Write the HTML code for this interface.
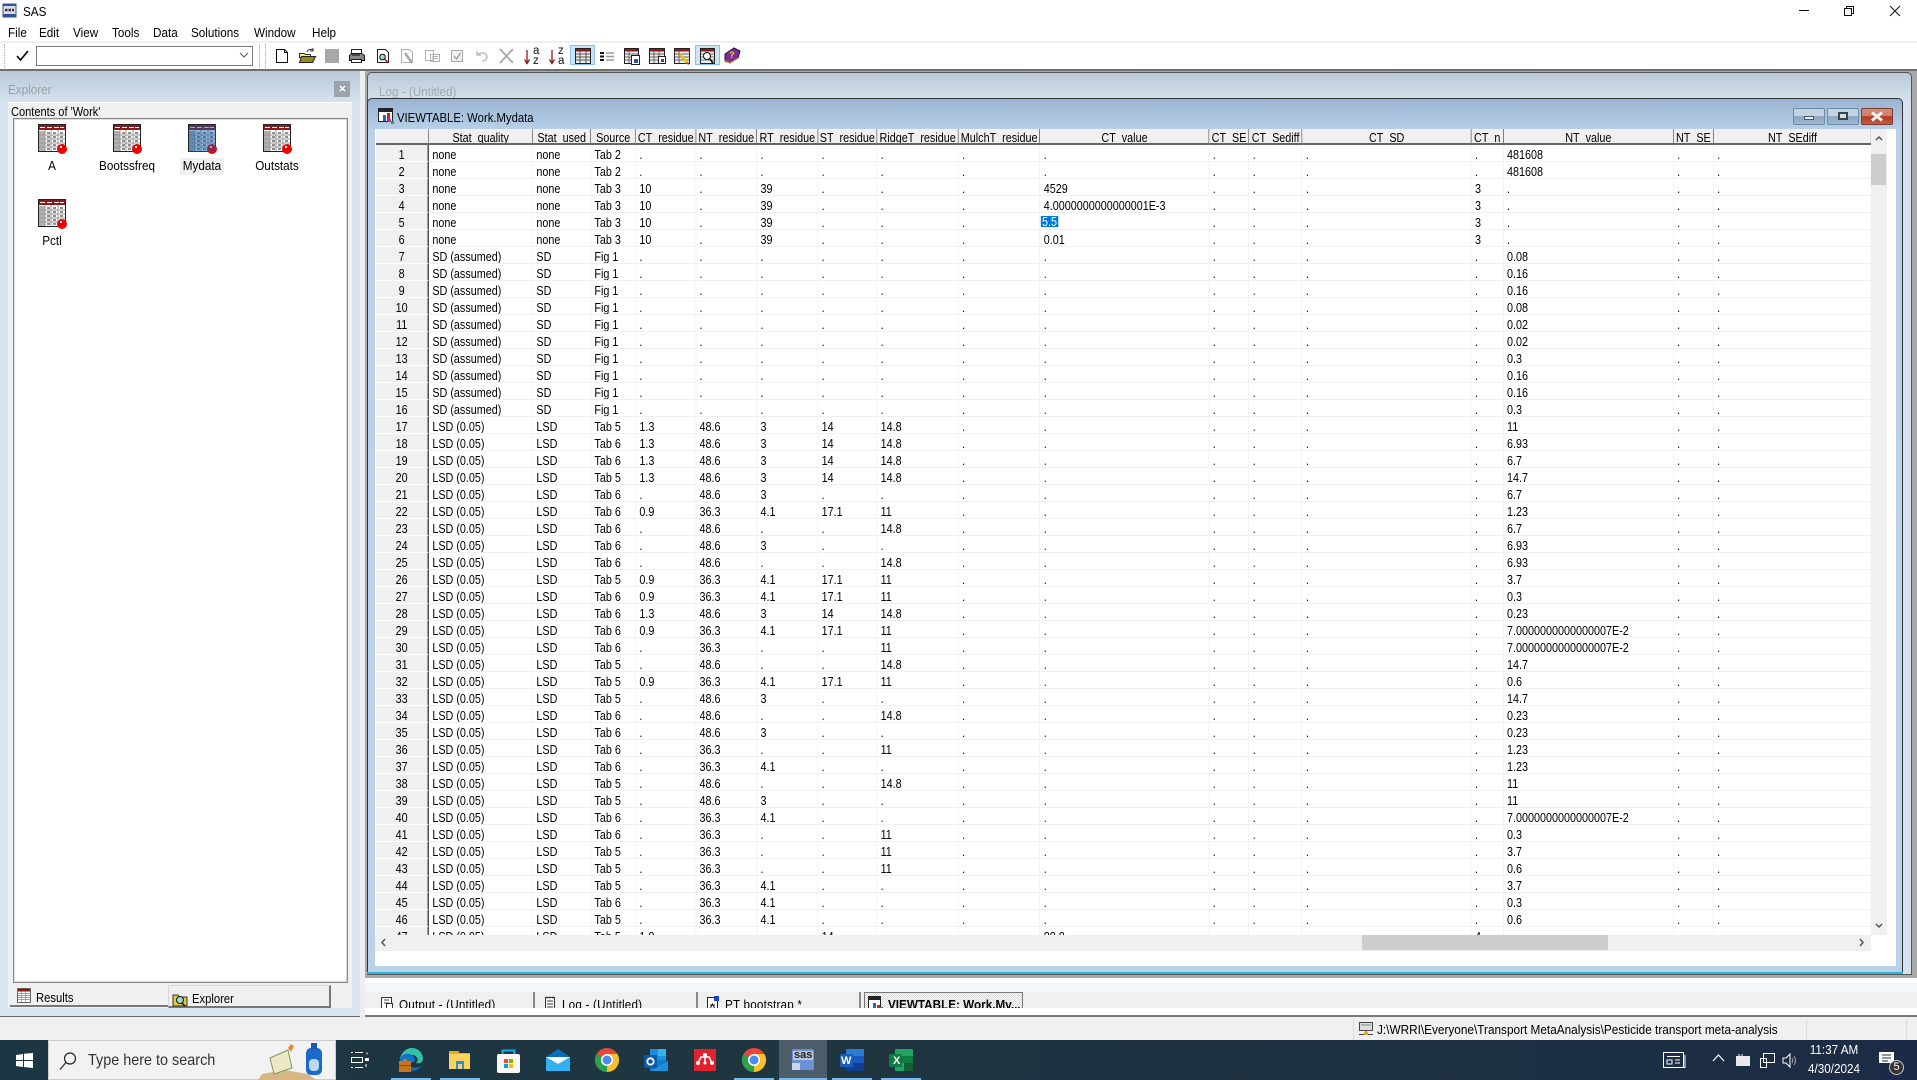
<!DOCTYPE html>
<html><head><meta charset="utf-8"><title>SAS</title>
<style>
html,body{margin:0;padding:0;width:1917px;height:1080px;overflow:hidden;background:#fff;font-family:"Liberation Sans",sans-serif;color:#000}
.a{position:absolute}
.t{position:absolute;white-space:nowrap;font-size:13px;line-height:16px;transform:scaleX(.9);transform-origin:left center}
.c{position:absolute;white-space:nowrap;font-size:13px;line-height:16px;transform:translateX(-50%) scaleX(.9)}
svg.a{overflow:visible}
#tw{position:absolute;left:375px;top:129px;width:1496px;height:806px;overflow:hidden;background:#fff}
table{position:absolute;left:1px;top:0;border-collapse:separate;border-spacing:0;table-layout:fixed;width:1802.400px;font-size:13px;transform:scaleX(.83);transform-origin:left top}
td,th{height:17px;box-sizing:border-box;padding:3px 0 0 4px;border-right:1px solid #f0f0f0;border-bottom:1px solid #f0f0f0;white-space:nowrap;overflow:hidden;font-weight:400;text-align:left;vertical-align:top;line-height:13px;background:#fff}
thead th{height:16px;line-height:11px;background:#f0f0f0;border-right:1px solid #666;border-bottom:2px solid #666;text-align:center;padding:3px 0 0}
tbody th{background:#f0f0f0;border-right:2px solid #555;border-bottom:1px solid #fff;text-align:center;padding:3px 0 0}
.sel{background:#0078d7;color:#fff;position:relative;top:0;left:-3px;display:inline-block;vertical-align:top;line-height:11px;height:11px;padding:0 1px}
.tab{position:absolute;top:9px;height:24px;background:#f0f0f0;border-right:2px solid #8a8a8a;box-sizing:border-box}
</style></head><body>
<svg width="0" height="0" style="position:absolute"><defs>
<symbol id="tb" viewBox="0 0 30 30"><rect x=".5" y=".5" width="27" height="27" fill="#fff" stroke="#222"/><rect x="1" y="1" width="26" height="5" fill="#8b1a1a"/><rect x="1" y="7" width="6" height="20" fill="#b0b0b0"/><path d="M2 3.500h5M9 3.500h5M16 3.500h5M22 3.500h4" stroke="#fff"/><path d="M1 11h26M1 15h26M1 19h26M1 23h26M7 6v21M13 6v21M20 6v21" stroke="#999"/><path d="M9 9h3M15 9h3M22 9h3M9 13h3M15 13h3M22 13h3M9 17h3M15 17h3M22 17h3M9 21h3M15 21h3M22 21h3M9 25h3M15 25h3" stroke="#222"/><circle cx="24" cy="25" r="5" fill="#e00"/><rect x="22" y="22" width="2" height="2" fill="#fff"/></symbol>
<symbol id="tbs" viewBox="0 0 24 24"><rect x="2.500" y="1.500" width="19" height="21" fill="#fff" stroke="#222"/><rect x="3" y="2" width="18" height="4" fill="#8b1a1a"/><path d="M3 9h18M3 12h18M3 15h18M3 18h18M8 6v16M14 6v16" stroke="#888"/></symbol>
</defs></svg>

<!-- title bar -->
<div class="a" style="left:0;top:0;width:1917px;height:41px;background:#fff"></div>
<svg class="a" style="left:2px;top:3px" width="15" height="15" viewBox="0 0 15 15"><rect x=".5" y=".5" width="14" height="14" fill="#2f5597"/><rect x="1.500" y="3" width="12" height="8" fill="#dde"/><path d="M3 7h9" stroke="#333" stroke-width="2.500" stroke-dasharray="2.500 1"/></svg>
<div class="t" style="left:23px;top:4px;font-size:13px">SAS</div>
<svg class="a" style="left:1799px;top:5px" width="105" height="12" viewBox="0 0 105 12" fill="none" stroke="#111"><path d="M0 5.500h10"/><path d="M45.500 3.500h7v7h-7zM47.500 3.500v-2h7v7h-2"/><path d="M91 1l10 10M101 1l-10 10"/></svg>
<div class="t" style="left:8px;top:25px">File</div><div class="t" style="left:39px;top:25px">Edit</div><div class="t" style="left:73px;top:25px">View</div><div class="t" style="left:112px;top:25px">Tools</div><div class="t" style="left:153px;top:25px">Data</div><div class="t" style="left:191px;top:25px">Solutions</div><div class="t" style="left:254px;top:25px">Window</div><div class="t" style="left:312px;top:25px">Help</div>
<!-- toolbar -->
<div class="a" style="left:0;top:41px;width:1917px;height:2px;background:#f0f0f0"></div>
<div class="a" style="left:0;top:43px;width:1917px;height:26px;background:#fff"></div>
<div class="a" style="left:4px;top:44px;height:24px;border-left:1px dotted #aaa"></div>
<div class="a" style="left:259px;top:44px;height:24px;border-left:1px solid #ccc"></div>
<div class="a" style="left:265px;top:44px;height:24px;border-left:1px dotted #aaa"></div>
<svg class="a" style="left:16px;top:50px" width="13" height="11" viewBox="0 0 13 11" fill="none" stroke="#000" stroke-width="1.600"><path d="M1 6l3.500 4L12 1"/></svg>
<div class="a" style="left:36px;top:46px;width:217px;height:20px;box-sizing:border-box;border:1px solid #7a7a7a;background:#fff"></div>
<svg class="a" style="left:239px;top:52px" width="10" height="7" viewBox="0 0 10 7" fill="none" stroke="#555"><path d="M1 1l4 4 4-4"/></svg>
<div class="a" style="left:570px;top:45px;width:25px;height:20px;box-sizing:border-box;border:1px solid #8cc0ea;background:#cde4f7"></div>
<div class="a" style="left:695px;top:45px;width:25px;height:20px;box-sizing:border-box;border:1px solid #8cc0ea;background:#cde4f7"></div>
<svg class="a" style="left:274px;top:45px" width="470" height="22" viewBox="0 0 470 22" fill="none">
<path d="M2.500 4.500h8l3 3v10h-11zM10.500 4.500v3h3" fill="#fff" stroke="#111"/>
<path d="M25.500 8.500h5l1 1h5v3h-11z" fill="#f7ea9a" stroke="#333"/><path d="M25.500 17.500l2-6h14l-3 6z" fill="#9a8a1a" stroke="#222"/><path d="M33 7c1-3 4-3 6-2M39 3v3h-3" stroke="#333"/>
<rect x="51" y="4" width="14" height="14" fill="#a8a8a8"/>
<path d="M77.500 4.500h10v5h-10z" fill="#fff" stroke="#222"/><path d="M75.500 10.500l2-2h10l3 2v5h-15z" fill="#888" stroke="#111"/><path d="M77.500 14.500h10v3h-10z" fill="#fff" stroke="#222"/><path d="M78 10h8" stroke="#333" stroke-width="1.500"/>
<path d="M103.500 4.500h8l3 3v10h-11z" fill="#fff" stroke="#222"/><circle cx="108.500" cy="12" r="2.800" fill="#9dd" stroke="#111"/><path d="M110.500 14l4 4" stroke="#a01818" stroke-width="1.500"/>
<path d="M127.500 4.500h8l3 3v10h-11z" fill="#fff" stroke="#b0b0b0"/><path d="M131 8l7 10" stroke="#a8a8a8" stroke-width="2.500"/>
<path d="M151.500 5.500h8v10h-8zM156.500 9.500h9v7h-9z" fill="#fff" stroke="#b0b0b0"/><path d="M158 11.500h6M158 13.500h6" stroke="#b0b0b0"/>
<rect x="177.500" y="5.500" width="11" height="11" fill="#f0f0f0" stroke="#aaa"/><path d="M180 11l2.500 3 4-6" stroke="#999" stroke-width="1.300"/>
<path d="M203 10c3-3 10-3 10 2 0 3-3 4-5 4M203 6v4h4" stroke="#bbb" stroke-width="1.400"/>
<path d="M226 4l13 14M239 4l-13 14" stroke="#aaa" stroke-width="1.800"/>
<path d="M253 5v13M250.500 14.500l2.500 4 2.500-4" stroke="#8b1a1a" stroke-width="1.300"/>
<path d="M278 5v13M275.500 14.500l2.500 4 2.500-4" stroke="#8b1a1a" stroke-width="1.300"/>
<rect x="301.500" y="3.500" width="15" height="15" fill="#eee" stroke="#222"/><rect x="302" y="4" width="14" height="2.500" fill="#8b1a1a"/><path d="M302 9h14M302 12h14M302 15h14M306 6v12M312 6v12" stroke="#555"/>
<path d="M326 8h4M326 11.500h4M326 15h4" stroke="#111" stroke-width="2"/><path d="M332 8h8M332 11.500h8M332 15h8" stroke="#999" stroke-width="1.500"/>
<rect x="350.500" y="3.500" width="14" height="15" fill="#eee" stroke="#222"/><rect x="351" y="4" width="13" height="2.500" fill="#8b1a1a"/><path d="M351 9h13M351 12h13M351 15h13M355 6v12" stroke="#666"/><rect x="357.500" y="10.500" width="8" height="9" fill="#fff" stroke="#222"/><rect x="360" y="14" width="4" height="4" fill="#2a4fb0"/>
<rect x="375.500" y="3.500" width="15" height="15" fill="#eee" stroke="#222"/><rect x="376" y="4" width="14" height="2.500" fill="#8b1a1a"/><path d="M376 9h14M376 12h14M376 15h14M380 6v12M385 6v12" stroke="#666"/><rect x="384.500" y="11.500" width="7" height="7" fill="#fff" stroke="#222"/><rect x="387" y="14" width="3" height="3" fill="#2a4fb0"/>
<rect x="400.500" y="3.500" width="15" height="15" fill="#eee" stroke="#222"/><rect x="401" y="4" width="14" height="2.500" fill="#8b1a1a"/><path d="M401 9h14M401 12h14M401 15h14M405 6v12" stroke="#666"/><path d="M406 9l7 9" stroke="#e5c800" stroke-width="2.500"/><path d="M413 18l2 1" stroke="#c22" stroke-width="2"/>
<rect x="426.500" y="3.500" width="14" height="15" fill="#eee" stroke="#222"/><rect x="427" y="4" width="13" height="2.500" fill="#8b1a1a"/><path d="M427 9h13M427 12h13M427 15h13" stroke="#777"/><circle cx="433" cy="11" r="3.500" fill="#fff" stroke="#111"/><path d="M436 14l3 4" stroke="#111" stroke-width="1.800"/>
<path d="M451 9l9-6 6 3-2 7-8 5-5-2z" fill="#7a2d96" stroke="#2a1040"/><path d="M451 15l5 3 8-5" stroke="#e08a20"/><text x="455" y="13" font-size="9" font-weight="700" fill="#f5d040" font-family="Liberation Sans">?</text>
</svg>
<div class="a" style="left:533px;top:46px;font-size:11.500px;line-height:10px;color:#111">a<br>z</div>
<div class="a" style="left:558px;top:46px;font-size:11.500px;line-height:10px;color:#111">z<br>a</div>

<!-- main background -->
<div class="a" style="left:0;top:69px;width:1917px;height:2px;background:#6f6f6f"></div>
<div class="a" style="left:0;top:71px;width:1917px;height:946px;background:#e9e9e9"></div>

<!-- explorer -->
<div class="a" style="left:0;top:71px;width:360px;height:945px;background:linear-gradient(#b9c9d8 0,#d6e3ef 32px,#d8e4f0 100%);border-right:1px solid #555;border-bottom:2px solid #6a6a6a;box-sizing:content-box"></div>
<div class="t" style="left:8px;top:82px;color:#9aa0a6">Explorer</div>
<div class="a" style="left:334px;top:81px;width:16px;height:16px;background:#9ba3ab"></div>
<svg class="a" style="left:339px;top:85px" width="7" height="7" viewBox="0 0 7 7" stroke="#fff" stroke-width="1.500"><path d="M1 1l5 5M6 1l-5 5"/></svg>
<div class="a" style="left:8px;top:102px;width:344px;height:905px;background:#f0f0f0;border-top:1px solid #fff"></div>
<div class="t" style="left:11px;top:104px;transform:scaleX(.85)">Contents of 'Work'</div>
<div class="a" style="left:13px;top:118px;width:335px;height:865px;box-sizing:border-box;background:#fff;border:1px solid #888;outline:1px solid #eee;box-shadow:inset 0 0 0 1px #ddd"></div>
<svg class="a" style="left:38px;top:124px" width="30" height="30"><use href="#tb"/></svg>
<svg class="a" style="left:113px;top:124px" width="30" height="30"><use href="#tb"/></svg>
<svg class="a" style="left:188px;top:124px" width="30" height="30"><use href="#tb"/></svg>
<svg class="a" style="left:188px;top:124px" width="30" height="30" viewBox="0 0 30 30"><rect x="1" y="1" width="27" height="27" fill="#0a5aa8" opacity=".45"/></svg>
<svg class="a" style="left:263px;top:124px" width="30" height="30"><use href="#tb"/></svg>
<svg class="a" style="left:38px;top:199px" width="30" height="30"><use href="#tb"/></svg>
<div class="a" style="left:180px;top:158px;width:44px;height:17px;background:#f0f0f0"></div>
<div class="c" style="left:52px;top:158px">A</div><div class="c" style="left:127px;top:158px">Bootssfreq</div><div class="c" style="left:202px;top:158px">Mydata</div><div class="c" style="left:277px;top:158px">Outstats</div><div class="c" style="left:52px;top:233px">Pctl</div>
<!-- explorer tabs -->
<div class="a" style="left:10px;top:986px;width:158px;height:21px;background:#f0f0f0;border-bottom:2px solid #777;box-sizing:border-box"></div>
<div class="a" style="left:168px;top:985px;width:163px;height:23px;background:#f0f0f0;border:1px solid #d8d8d8;border-right:2px solid #777;border-bottom:2px solid #777;box-sizing:border-box"></div>
<svg class="a" style="left:16px;top:987px" width="16" height="17"><use href="#tbs"/></svg>
<svg class="a" style="left:172px;top:991px" width="16" height="16" viewBox="0 0 16 16"><path d="M1 4h5l1 2h8v9H1z" fill="#e8c93a" stroke="#333"/><circle cx="8" cy="9" r="3.500" fill="#9dd" stroke="#111"/><path d="M10 12l3 3" stroke="#111" stroke-width="1.500"/></svg>
<div class="t" style="left:36px;top:990px;font-size:12.500px">Results</div><div class="t" style="left:192px;top:991px;font-size:12.500px">Explorer</div>

<!-- right main frame -->
<div class="a" style="left:365px;top:71px;width:1552px;height:907px;background:#a9a9a9"></div>
<div class="a" style="left:367px;top:72px;width:1545px;height:903px;box-sizing:border-box;border:1px solid #555;border-radius:5px 5px 0 0;background:linear-gradient(#bac9d8 0,#d5e1ec 27px)"></div>
<div class="t" style="left:379px;top:84px;color:#a0a7ad">Log - (Untitled)</div>
<div class="a" style="left:367px;top:98px;width:1536px;height:876px;box-sizing:border-box;border:1px solid #333;border-bottom:0;border-radius:5px 5px 0 0;background:linear-gradient(#99b4d1 0,#b8d1e9 31px,#b9d2ea 100%)"></div>
<div class="a" style="left:367px;top:972px;width:1536px;height:2px;background:#27b4d8"></div>
<svg class="a" style="left:378px;top:108px" width="16" height="16" viewBox="0 0 16 16"><rect x=".5" y=".5" width="14" height="13" fill="#fff" stroke="#222"/><rect x="1" y="1" width="13" height="3" fill="#223"/><rect x="5" y="7" width="3" height="6" fill="#26c"/><rect x="9" y="5" width="3" height="8" fill="#c22"/><rect x="10" y="11" width="3" height="3" fill="#c2c"/><rect x="13" y="13" width="3" height="3" fill="#2a2"/></svg>
<div class="t" style="left:397px;top:110px;transform:scaleX(.87)">VIEWTABLE: Work.Mydata</div>
<!-- mdi buttons -->
<div class="a" style="left:1793px;top:108px;width:32px;height:17px;box-sizing:border-box;border:1px solid #6f8aa5;border-radius:2px;background:linear-gradient(#c3d3e3 0,#c3d3e3 45%,#8aa5c0 50%,#a0bad4 100%)"></div>
<div class="a" style="left:1804px;top:116px;width:10px;height:4px;box-sizing:border-box;background:#eee;border:1px solid #456"></div>
<div class="a" style="left:1827px;top:108px;width:32px;height:17px;box-sizing:border-box;border:1px solid #6f8aa5;border-radius:2px;background:linear-gradient(#c3d3e3 0,#c3d3e3 45%,#8aa5c0 50%,#a0bad4 100%)"></div>
<div class="a" style="left:1838px;top:112px;width:10px;height:8px;box-sizing:border-box;background:#ddd;border:2px solid #345"></div>
<div class="a" style="left:1861px;top:108px;width:32px;height:17px;box-sizing:border-box;border:1px solid #7a3a30;border-radius:2px;background:linear-gradient(#d28f80 0,#cf7c6a 45%,#b03a22 50%,#c25a42 100%)"></div>
<svg class="a" style="left:1870px;top:111px" width="14" height="11" viewBox="0 0 14 11" stroke="#f4f4f4" stroke-width="3"><path d="M2 1.500l10 8M12 1.500l-10 8"/></svg>
<!-- white inner -->
<div class="a" style="left:375px;top:129px;width:1521px;height:837px;background:#fff"></div>
<div id="tw"><table>
<colgroup><col style="width:63.860px"><col style="width:125.300px"><col style="width:69.880px"><col style="width:54.200px"><col style="width:72.300px"><col style="width:73.500px"><col style="width:73.500px"><col style="width:71.100px"><col style="width:98.200px"><col style="width:98.200px"><col style="width:203.600px"><col style="width:48.200px"><col style="width:63.900px"><col style="width:203.600px"><col style="width:38.600px"><col style="width:204.800px"><col style="width:48.200px"><col style="width:190.400px"></colgroup>
<thead><tr><th><th>Stat_quality<th>Stat_used<th>Source<th>CT_residue<th>NT_residue<th>RT_residue<th>ST_residue<th>RidgeT_residue<th>MulchT_residue<th>CT_value<th>CT_SE<th>CT_Sediff<th>CT_SD<th>CT_n<th>NT_value<th>NT_SE<th>NT_SEdiff</tr></thead>
<tbody>
<tr><th>1<td>none<td>none<td>Tab 2<td>.<td>.<td>.<td>.<td>.<td>.<td>.<td>.<td>.<td>.<td>.<td>481608<td>.<td>.
<tr><th>2<td>none<td>none<td>Tab 2<td>.<td>.<td>.<td>.<td>.<td>.<td>.<td>.<td>.<td>.<td>.<td>481608<td>.<td>.
<tr><th>3<td>none<td>none<td>Tab 3<td>10<td>.<td>39<td>.<td>.<td>.<td>4529<td>.<td>.<td>.<td>3<td>.<td>.<td>.
<tr><th>4<td>none<td>none<td>Tab 3<td>10<td>.<td>39<td>.<td>.<td>.<td>4.0000000000000001E-3<td>.<td>.<td>.<td>3<td>.<td>.<td>.
<tr><th>5<td>none<td>none<td>Tab 3<td>10<td>.<td>39<td>.<td>.<td>.<td><span class="sel">5.5</span><td>.<td>.<td>.<td>3<td>.<td>.<td>.
<tr><th>6<td>none<td>none<td>Tab 3<td>10<td>.<td>39<td>.<td>.<td>.<td>0.01<td>.<td>.<td>.<td>3<td>.<td>.<td>.
<tr><th>7<td>SD (assumed)<td>SD<td>Fig 1<td>.<td>.<td>.<td>.<td>.<td>.<td>.<td>.<td>.<td>.<td>.<td>0.08<td>.<td>.
<tr><th>8<td>SD (assumed)<td>SD<td>Fig 1<td>.<td>.<td>.<td>.<td>.<td>.<td>.<td>.<td>.<td>.<td>.<td>0.16<td>.<td>.
<tr><th>9<td>SD (assumed)<td>SD<td>Fig 1<td>.<td>.<td>.<td>.<td>.<td>.<td>.<td>.<td>.<td>.<td>.<td>0.16<td>.<td>.
<tr><th>10<td>SD (assumed)<td>SD<td>Fig 1<td>.<td>.<td>.<td>.<td>.<td>.<td>.<td>.<td>.<td>.<td>.<td>0.08<td>.<td>.
<tr><th>11<td>SD (assumed)<td>SD<td>Fig 1<td>.<td>.<td>.<td>.<td>.<td>.<td>.<td>.<td>.<td>.<td>.<td>0.02<td>.<td>.
<tr><th>12<td>SD (assumed)<td>SD<td>Fig 1<td>.<td>.<td>.<td>.<td>.<td>.<td>.<td>.<td>.<td>.<td>.<td>0.02<td>.<td>.
<tr><th>13<td>SD (assumed)<td>SD<td>Fig 1<td>.<td>.<td>.<td>.<td>.<td>.<td>.<td>.<td>.<td>.<td>.<td>0.3<td>.<td>.
<tr><th>14<td>SD (assumed)<td>SD<td>Fig 1<td>.<td>.<td>.<td>.<td>.<td>.<td>.<td>.<td>.<td>.<td>.<td>0.16<td>.<td>.
<tr><th>15<td>SD (assumed)<td>SD<td>Fig 1<td>.<td>.<td>.<td>.<td>.<td>.<td>.<td>.<td>.<td>.<td>.<td>0.16<td>.<td>.
<tr><th>16<td>SD (assumed)<td>SD<td>Fig 1<td>.<td>.<td>.<td>.<td>.<td>.<td>.<td>.<td>.<td>.<td>.<td>0.3<td>.<td>.
<tr><th>17<td>LSD (0.05)<td>LSD<td>Tab 5<td>1.3<td>48.6<td>3<td>14<td>14.8<td>.<td>.<td>.<td>.<td>.<td>.<td>11<td>.<td>.
<tr><th>18<td>LSD (0.05)<td>LSD<td>Tab 6<td>1.3<td>48.6<td>3<td>14<td>14.8<td>.<td>.<td>.<td>.<td>.<td>.<td>6.93<td>.<td>.
<tr><th>19<td>LSD (0.05)<td>LSD<td>Tab 6<td>1.3<td>48.6<td>3<td>14<td>14.8<td>.<td>.<td>.<td>.<td>.<td>.<td>6.7<td>.<td>.
<tr><th>20<td>LSD (0.05)<td>LSD<td>Tab 5<td>1.3<td>48.6<td>3<td>14<td>14.8<td>.<td>.<td>.<td>.<td>.<td>.<td>14.7<td>.<td>.
<tr><th>21<td>LSD (0.05)<td>LSD<td>Tab 6<td>.<td>48.6<td>3<td>.<td>.<td>.<td>.<td>.<td>.<td>.<td>.<td>6.7<td>.<td>.
<tr><th>22<td>LSD (0.05)<td>LSD<td>Tab 6<td>0.9<td>36.3<td>4.1<td>17.1<td>11<td>.<td>.<td>.<td>.<td>.<td>.<td>1.23<td>.<td>.
<tr><th>23<td>LSD (0.05)<td>LSD<td>Tab 6<td>.<td>48.6<td>.<td>.<td>14.8<td>.<td>.<td>.<td>.<td>.<td>.<td>6.7<td>.<td>.
<tr><th>24<td>LSD (0.05)<td>LSD<td>Tab 6<td>.<td>48.6<td>3<td>.<td>.<td>.<td>.<td>.<td>.<td>.<td>.<td>6.93<td>.<td>.
<tr><th>25<td>LSD (0.05)<td>LSD<td>Tab 6<td>.<td>48.6<td>.<td>.<td>14.8<td>.<td>.<td>.<td>.<td>.<td>.<td>6.93<td>.<td>.
<tr><th>26<td>LSD (0.05)<td>LSD<td>Tab 5<td>0.9<td>36.3<td>4.1<td>17.1<td>11<td>.<td>.<td>.<td>.<td>.<td>.<td>3.7<td>.<td>.
<tr><th>27<td>LSD (0.05)<td>LSD<td>Tab 6<td>0.9<td>36.3<td>4.1<td>17.1<td>11<td>.<td>.<td>.<td>.<td>.<td>.<td>0.3<td>.<td>.
<tr><th>28<td>LSD (0.05)<td>LSD<td>Tab 6<td>1.3<td>48.6<td>3<td>14<td>14.8<td>.<td>.<td>.<td>.<td>.<td>.<td>0.23<td>.<td>.
<tr><th>29<td>LSD (0.05)<td>LSD<td>Tab 6<td>0.9<td>36.3<td>4.1<td>17.1<td>11<td>.<td>.<td>.<td>.<td>.<td>.<td>7.0000000000000007E-2<td>.<td>.
<tr><th>30<td>LSD (0.05)<td>LSD<td>Tab 6<td>.<td>36.3<td>.<td>.<td>11<td>.<td>.<td>.<td>.<td>.<td>.<td>7.0000000000000007E-2<td>.<td>.
<tr><th>31<td>LSD (0.05)<td>LSD<td>Tab 5<td>.<td>48.6<td>.<td>.<td>14.8<td>.<td>.<td>.<td>.<td>.<td>.<td>14.7<td>.<td>.
<tr><th>32<td>LSD (0.05)<td>LSD<td>Tab 5<td>0.9<td>36.3<td>4.1<td>17.1<td>11<td>.<td>.<td>.<td>.<td>.<td>.<td>0.6<td>.<td>.
<tr><th>33<td>LSD (0.05)<td>LSD<td>Tab 5<td>.<td>48.6<td>3<td>.<td>.<td>.<td>.<td>.<td>.<td>.<td>.<td>14.7<td>.<td>.
<tr><th>34<td>LSD (0.05)<td>LSD<td>Tab 6<td>.<td>48.6<td>.<td>.<td>14.8<td>.<td>.<td>.<td>.<td>.<td>.<td>0.23<td>.<td>.
<tr><th>35<td>LSD (0.05)<td>LSD<td>Tab 6<td>.<td>48.6<td>3<td>.<td>.<td>.<td>.<td>.<td>.<td>.<td>.<td>0.23<td>.<td>.
<tr><th>36<td>LSD (0.05)<td>LSD<td>Tab 6<td>.<td>36.3<td>.<td>.<td>11<td>.<td>.<td>.<td>.<td>.<td>.<td>1.23<td>.<td>.
<tr><th>37<td>LSD (0.05)<td>LSD<td>Tab 6<td>.<td>36.3<td>4.1<td>.<td>.<td>.<td>.<td>.<td>.<td>.<td>.<td>1.23<td>.<td>.
<tr><th>38<td>LSD (0.05)<td>LSD<td>Tab 5<td>.<td>48.6<td>.<td>.<td>14.8<td>.<td>.<td>.<td>.<td>.<td>.<td>11<td>.<td>.
<tr><th>39<td>LSD (0.05)<td>LSD<td>Tab 5<td>.<td>48.6<td>3<td>.<td>.<td>.<td>.<td>.<td>.<td>.<td>.<td>11<td>.<td>.
<tr><th>40<td>LSD (0.05)<td>LSD<td>Tab 6<td>.<td>36.3<td>4.1<td>.<td>.<td>.<td>.<td>.<td>.<td>.<td>.<td>7.0000000000000007E-2<td>.<td>.
<tr><th>41<td>LSD (0.05)<td>LSD<td>Tab 6<td>.<td>36.3<td>.<td>.<td>11<td>.<td>.<td>.<td>.<td>.<td>.<td>0.3<td>.<td>.
<tr><th>42<td>LSD (0.05)<td>LSD<td>Tab 5<td>.<td>36.3<td>.<td>.<td>11<td>.<td>.<td>.<td>.<td>.<td>.<td>3.7<td>.<td>.
<tr><th>43<td>LSD (0.05)<td>LSD<td>Tab 5<td>.<td>36.3<td>.<td>.<td>11<td>.<td>.<td>.<td>.<td>.<td>.<td>0.6<td>.<td>.
<tr><th>44<td>LSD (0.05)<td>LSD<td>Tab 5<td>.<td>36.3<td>4.1<td>.<td>.<td>.<td>.<td>.<td>.<td>.<td>.<td>3.7<td>.<td>.
<tr><th>45<td>LSD (0.05)<td>LSD<td>Tab 6<td>.<td>36.3<td>4.1<td>.<td>.<td>.<td>.<td>.<td>.<td>.<td>.<td>0.3<td>.<td>.
<tr><th>46<td>LSD (0.05)<td>LSD<td>Tab 5<td>.<td>36.3<td>4.1<td>.<td>.<td>.<td>.<td>.<td>.<td>.<td>.<td>0.6<td>.<td>.
<tr><th>47<td>LSD (0.05)<td>LSD<td>Tab 5<td>1.8<td>.<td>.<td>14<td>.<td>.<td>88.8<td>.<td>.<td>.<td>4<td>.<td>.<td>.
</tbody></table></div>
<!-- v scrollbar -->
<div class="a" style="left:1871px;top:129px;width:16px;height:806px;background:#f0f0f0"></div>
<div class="a" style="left:1871px;top:154px;width:15px;height:31px;background:#cdcdcd"></div>
<svg class="a" style="left:1875px;top:135px" width="8" height="6" viewBox="0 0 8 6" fill="none" stroke="#555" stroke-width="1.500"><path d="M1 5l3-3 3 3"/></svg>
<svg class="a" style="left:1875px;top:923px" width="8" height="6" viewBox="0 0 8 6" fill="none" stroke="#555" stroke-width="1.500"><path d="M1 1l3 3 3-3"/></svg>
<!-- h scrollbar -->
<div class="a" style="left:375px;top:935px;width:1496px;height:16px;background:#f0f0f0"></div>
<div class="a" style="left:1362px;top:935px;width:246px;height:15px;background:#cdcdcd"></div>
<svg class="a" style="left:380px;top:938px" width="6" height="9" viewBox="0 0 6 9" fill="none" stroke="#555" stroke-width="1.500"><path d="M5 1L2 4.500 5 8"/></svg>
<svg class="a" style="left:1859px;top:938px" width="6" height="9" viewBox="0 0 6 9" fill="none" stroke="#555" stroke-width="1.500"><path d="M1 1l3 3.500L1 8"/></svg>

<!-- window tab strip -->
<div class="a" style="left:365px;top:978px;width:1552px;height:38px;background:#fff"></div>
<div class="a" style="left:365px;top:983px;width:1552px;height:9px;background:#f3f7fa"></div>
<div class="a" style="left:365px;top:992px;width:1552px;height:16px;background:#f0f0f0"></div>
<div class="a" style="left:365px;top:1015px;width:1552px;height:2px;background:#777"></div>
<div class="a" style="left:360px;top:71px;width:5px;height:946px;background:#eee"></div>
<div style="position:absolute;left:365px;top:983px;width:1552px;height:25px;overflow:hidden">
<div class="tab" style="left:9px;width:161px"></div><div class="tab" style="left:170px;width:163px"></div><div class="tab" style="left:333px;width:163px"></div><div class="tab" style="left:499px;width:159px;border:1px solid #777;border-bottom:0;background:repeating-conic-gradient(#fff 0 25%,#d8d8d8 0 50%) 0 0/2px 2px"></div>
<svg class="a" style="left:16px;top:14px" width="13" height="14" viewBox="0 0 13 14"><rect x=".5" y=".5" width="10" height="13" fill="#fff" stroke="#333"/><path d="M3 3h5M3 6h5" stroke="#444"/><rect x="5.500" y="6.500" width="6" height="7" fill="#fff" stroke="#333"/></svg>
<svg class="a" style="left:179px;top:13px" width="12" height="15" viewBox="0 0 12 15"><path d="M1.500 1.500h9v13h-9z" fill="#fff" stroke="#333"/><path d="M3 .5v2M6 .5v2M9 .5v2M3 5h6M3 8h6M3 11h6" stroke="#333"/></svg>
<svg class="a" style="left:342px;top:13px" width="13" height="15" viewBox="0 0 13 15"><rect x=".5" y="1.500" width="10" height="13" fill="#fff" stroke="#222"/><path d="M3 13l2.500-5L8 13M3 9h5" stroke="#222" fill="none"/><rect x="7" y="0" width="5" height="5" fill="#2040d0"/></svg>
<svg class="a" style="left:503px;top:13px" width="16" height="15" viewBox="0 0 16 15"><rect x=".5" y=".5" width="12" height="13" fill="#fff" stroke="#222"/><rect x="1" y="1" width="11" height="3" fill="#223"/><rect x="5" y="7" width="3" height="6" fill="#26c"/><rect x="9" y="9" width="3" height="4" fill="#c22"/><rect x="12" y="11" width="3" height="3" fill="#c2c"/></svg>
<div class="t" style="left:34px;top:14px;font-size:13px;letter-spacing:.2px">Output - (Untitled)</div>
<div class="t" style="left:197px;top:14px;font-size:13px;letter-spacing:.2px">Log - (Untitled)</div>
<div class="t" style="left:360px;top:14px;font-size:13px;letter-spacing:.2px">PT bootstrap *</div>
<div class="t" style="left:523px;top:14px;font-size:13px;font-weight:700">VIEWTABLE: Work.Mv...</div>
</div>

<!-- status bar -->
<div class="a" style="left:0;top:1017px;width:1917px;height:23px;background:#f0f0f0"></div>
<div class="a" style="left:1353px;top:1019px;height:21px;border-left:1px solid #dcdcdc"></div><div class="a" style="left:1806px;top:1019px;height:21px;border-left:1px solid #dcdcdc"></div><div class="a" style="left:1906px;top:1019px;height:21px;border-left:1px solid #dcdcdc"></div>
<svg class="a" style="left:1358px;top:1022px" width="17" height="14" viewBox="0 0 17 14"><rect x="1.500" y=".5" width="13" height="8" fill="#ddd" stroke="#444"/><path d="M3 3h10" stroke="#888"/><path d="M8 9v3M1 12.500h14" stroke="#444"/><rect x="6" y="10" width="4" height="3" fill="#da3"/></svg>
<div class="t" style="left:1377px;top:1022px;font-size:13px;transform:scaleX(.907)">J:\WRRI\Everyone\Transport MetaAnalysis\Pesticide transport meta-analysis</div>

<!-- taskbar -->
<div class="a" style="left:0;top:1040px;width:1917px;height:40px;background:linear-gradient(90deg,#1c3743 0,#1f3640 40%,#1b2b45 100%)"></div>
<svg class="a" style="left:16px;top:1053px" width="17" height="15" viewBox="0 0 17 15" fill="#fff"><path d="M0 2l7-1v6H0zM8 .8L17 0v7H8zM0 8h7v6l-7-1zM8 8h9v7l-9-1z"/></svg>
<div class="a" style="left:48px;top:1040px;width:288px;height:40px;background:#f2f2f2;box-shadow:inset 0 0 0 1px #ccc"></div>
<svg class="a" style="left:59px;top:1052px" width="18" height="18" viewBox="0 0 18 18" fill="none" stroke="#222" stroke-width="1.200"><circle cx="11" cy="6.500" r="5.500"/><path d="M7 10.500l-6 7"/></svg>
<div class="t" style="left:88px;top:1052px;font-size:16px;line-height:18px;color:#333;transform:scaleX(.9)">Type here to search</div>
<svg class="a" style="left:258px;top:1042px" width="76" height="38" viewBox="0 0 76 38"><path d="M4 32l22-4 24 4 8 6H0z" fill="#d8b786"/><path d="M12 16l18-8 4 18-18 6z" fill="#eee8c8" stroke="#7a9a5a"/><path d="M30 6l3-4 3 2-3 6z" fill="#e88830"/><rect x="48" y="6" width="16" height="27" rx="5" fill="#1a6ac8"/><rect x="53" y="1" width="6" height="6" fill="#1a5ab0"/><rect x="51" y="17" width="10" height="12" rx="4" fill="#bcd8f4"/></svg>
<svg class="a" style="left:351px;top:1052px" width="18" height="16" viewBox="0 0 18 16" fill="none" stroke="#fff"><path d="M0 .5h2M4 .5h8M0 15.500h2M4 15.500h8M.5 5.500h11v5H.5zM16 .5v2"/><rect x="14" y="6" width="4" height="3" fill="#fff" stroke="none"/><path d="M15 12v3"/></svg>
<div class="a" style="left:779px;top:1040px;width:48px;height:40px;background:#4c5d69"></div>
<svg class="a" style="left:399px;top:1048px" width="24" height="24" viewBox="0 0 24 24"><path d="M1 11C2 4 8 0 13 0c6 0 11 5 11 11 0 3-3 5-7 4 3-2 2-7-3-8C9 6 5 8 4 13z" fill="#35c1a5"/><path d="M1 11c1-4 6-6 10-5 4 1 6 5 4 8l-5 1-9 1z" fill="#1272c4"/><path d="M10 23c5 1 10-1 12-5-4 2-8 2-12 0z" fill="#1a64b0"/><rect x="0" y="13" width="12" height="11" fill="#c8741c"/><rect x="0" y="17" width="12" height="1" fill="#8a4a10"/><rect x="4" y="11" width="4" height="2" fill="#c8741c"/></svg>
<svg class="a" style="left:449px;top:1051px" width="22" height="18" viewBox="0 0 22 18"><path d="M0 0h9l2 2h10v16H0z" fill="#e9a92b"/><rect x="0" y="3" width="21" height="15" fill="#fbd35c"/><rect x="7" y="10" width="8" height="8" fill="#2b8fd9"/><rect x="9" y="13" width="4" height="5" fill="#fbd35c"/></svg>
<svg class="a" style="left:497px;top:1049px" width="23" height="24" viewBox="0 0 23 24"><path d="M5.500 6V1.500h12V6" fill="none" stroke="#18a8e6" stroke-width="2"/><rect x="0" y="5" width="23" height="19" rx="2" fill="#f7f7f7"/><rect x="7" y="10" width="4" height="4" fill="#f25022"/><rect x="12" y="10" width="4" height="4" fill="#7fba00"/><rect x="7" y="15" width="4" height="4" fill="#00a4ef"/><rect x="12" y="15" width="4" height="4" fill="#ffb900"/></svg>
<svg class="a" style="left:546px;top:1049px" width="24" height="22" viewBox="0 0 24 22"><path d="M12 0L24 8v14H0V8z" fill="#0a6fc2"/><path d="M0 8h24v14H0z" fill="#2fb2ef"/><path d="M0 8h24l-12 7z" fill="#fff"/></svg>
<svg class="a" style="left:595px;top:1048px" width="24" height="24" viewBox="0 0 24 24"><circle cx="12" cy="12" r="12" fill="#e8453c"/><path d="M12 24A12 12 0 0 1 1.600 6L12 12z" fill="#2ba14b"/><path d="M12 24A12 12 0 0 0 22.400 6H12z" fill="#f6c12c"/><circle cx="12" cy="12" r="6" fill="#fff"/><circle cx="12" cy="12" r="4.500" fill="#4a8af4"/></svg>
<svg class="a" style="left:644px;top:1049px" width="24" height="22" viewBox="0 0 24 22"><rect x="6" y="0" width="16" height="14" fill="#1f8fdc"/><rect x="14" y="0" width="8" height="7" fill="#37b0ee"/><path d="M6 10l18 2v10H6z" fill="#0f78c9"/><path d="M6 22l18-10v10z" fill="#1f8fdc"/><rect x="0" y="6" width="13" height="13" rx="1" fill="#0a5aa8"/><circle cx="6.500" cy="12.500" r="3.200" fill="none" stroke="#fff" stroke-width="1.800"/></svg>
<svg class="a" style="left:694px;top:1049px" width="22" height="22" viewBox="0 0 22 22"><rect width="22" height="22" fill="#e0222f"/><circle cx="11" cy="6" r="2" fill="#fff"/><circle cx="4" cy="14" r="2" fill="#fff"/><circle cx="18" cy="14" r="2" fill="#fff"/><circle cx="11" cy="14" r="1.500" fill="#fff"/><path d="M4 14l3-6h8l3 6M11 6v8" stroke="#fff" stroke-width="1.500" fill="none"/></svg>
<svg class="a" style="left:742px;top:1048px" width="24" height="24" viewBox="0 0 24 24"><circle cx="12" cy="12" r="12" fill="#e8453c"/><path d="M12 24A12 12 0 0 1 1.600 6L12 12z" fill="#2ba14b"/><path d="M12 24A12 12 0 0 0 22.400 6H12z" fill="#f6c12c"/><circle cx="12" cy="12" r="6" fill="#fff"/><circle cx="12" cy="12" r="4.500" fill="#4a8af4"/></svg>
<svg class="a" style="left:792px;top:1049px" width="22" height="21" viewBox="0 0 22 21"><rect x="0" y="0" width="22" height="21" rx="2" fill="#6b92d6"/><rect x="1" y="2" width="20" height="9" fill="#b9c6d4"/><rect x="0" y="14" width="8" height="7" fill="#c8d8f4"/></svg>
<div class="a" style="left:794px;top:1049px;font-size:11px;font-weight:700;color:#222;line-height:12px">sas</div>
<svg class="a" style="left:840px;top:1049px" width="24" height="22" viewBox="0 0 24 22"><rect x="6" y="0" width="18" height="22" rx="1" fill="#2b7cd3"/><path d="M6 7h18v7H6z" fill="#185abd"/><path d="M6 14h18v8H6z" fill="#103f91"/><rect x="0" y="5" width="13" height="13" rx="1" fill="#185abd"/></svg>
<div class="a" style="left:841px;top:1055px;font-size:11px;font-weight:700;color:#fff;line-height:12px">W</div>
<svg class="a" style="left:889px;top:1049px" width="24" height="22" viewBox="0 0 24 22"><rect x="6" y="0" width="18" height="22" rx="1" fill="#21a366"/><path d="M6 7h18v7H6z" fill="#107c41"/><path d="M15 14h9v8h-9z" fill="#185c37"/><rect x="0" y="5" width="13" height="13" rx="1" fill="#107c41"/></svg>
<div class="a" style="left:893px;top:1055px;font-size:11px;font-weight:700;color:#fff;line-height:12px">X</div>
<div class="a" style="left:391px;top:1078px;width:40px;height:2px;background:#76b9ed"></div><div class="a" style="left:440px;top:1078px;width:40px;height:2px;background:#76b9ed"></div><div class="a" style="left:734px;top:1078px;width:40px;height:2px;background:#76b9ed"></div><div class="a" style="left:779px;top:1078px;width:48px;height:2px;background:#76b9ed"></div><div class="a" style="left:832px;top:1078px;width:40px;height:2px;background:#76b9ed"></div><div class="a" style="left:881px;top:1078px;width:40px;height:2px;background:#76b9ed"></div>
<!-- tray -->
<svg class="a" style="left:1663px;top:1052px" width="24" height="17" viewBox="0 0 24 17" fill="none" stroke="#fff"><path d="M.5.500h20v15H.5zM22 3v12.500H3"/><path d="M4 4.500h13M4 8h5v4H4zM12 8h5M12 11h5"/></svg>
<svg class="a" style="left:1712px;top:1054px" width="13" height="8" viewBox="0 0 13 8" fill="none" stroke="#fff" stroke-width="1.200"><path d="M1 7l5.500-6L12 7"/></svg>
<svg class="a" style="left:1736px;top:1053px" width="14" height="15" viewBox="0 0 14 15" fill="none" stroke="#fff"><rect x=".5" y="3.500" width="13" height="9" fill="#fff" opacity=".9"/><path d="M3 1v3M6 1v3"/></svg>
<svg class="a" style="left:1760px;top:1053px" width="15" height="15" viewBox="0 0 15 15" fill="none" stroke="#fff"><path d="M3.500.500h11v9h-11zM.5 5.500h6v9h-6z"/></svg>
<svg class="a" style="left:1782px;top:1053px" width="16" height="15" viewBox="0 0 16 15" fill="none" stroke="#fff"><path d="M1 5h3l4-4v13l-4-4H1z"/><path d="M10 5c1 1.500 1 3.500 0 5M12 3c2 3 2 6 0 9" stroke="#aaa"/></svg>
<div class="c" style="left:1834px;top:1042px;font-size:13px;color:#fff">11:37 AM</div>
<div class="c" style="left:1834px;top:1061px;font-size:13px;color:#fff">4/30/2024</div>
<svg class="a" style="left:1879px;top:1052px" width="19" height="17" viewBox="0 0 19 17"><path d="M0 0h15v11l-4 4v-4H0z" fill="#fff"/><path d="M3 3h9M3 6h9M3 9h6" stroke="#1b2b45"/></svg>
<div class="a" style="left:1889px;top:1060px;width:15px;height:15px;border-radius:50%;background:#333;border:1px solid #ccc;box-sizing:border-box;color:#fff;font-size:11px;line-height:13px;text-align:center">5</div>
</body></html>
